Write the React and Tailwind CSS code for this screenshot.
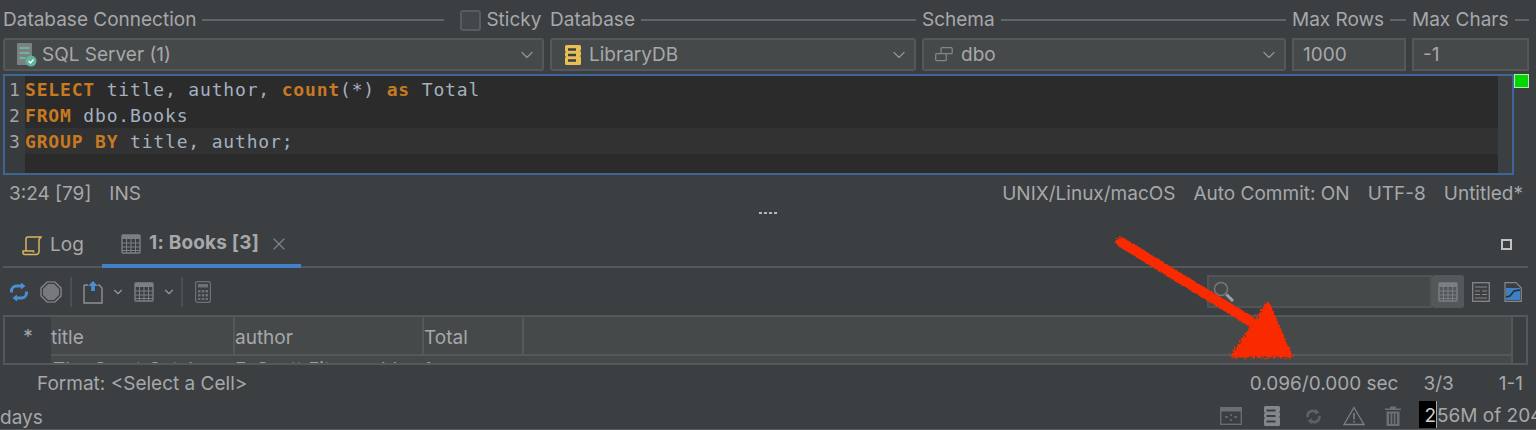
import React from "react";
import { ChevronDown, X } from "lucide-react";

const GridIcon = ({ className = "" }) => (
  <svg viewBox="0 0 20 20" className={className}>
    <rect x="1" y="1" width="18" height="18" rx="1" fill="none" stroke="#7d8083" strokeWidth="1.4" />
    <rect x="1" y="1" width="18" height="4" fill="#7d8083" />
    <path d="M1 9h18M1 13h18M1 16.5h18M5.5 5v14M10 5v14M14.5 5v14" stroke="#7d8083" strokeWidth="1" />
  </svg>
);

const Label = ({ children }) => (
  <div className="flex h-6 items-center gap-[6px]">
    <span className="whitespace-nowrap pt-[1px]">{children}</span>
    <span className="h-[2px] flex-1 bg-[#626567]" />
  </div>
);

const Select = ({ icon, text }) => (
  <div className="flex h-[33px] items-center rounded-[3px] border-2 border-[#55585a] bg-[#45494a]">
    <span className="flex w-[32px] shrink-0 justify-end">{icon}</span>
    <span className="ml-[5px] flex-1 whitespace-nowrap pt-[2px]">{text}</span>
    <ChevronDown className="mr-[5px] h-[20px] w-[20px] text-[#8f9194]" strokeWidth={1.6} />
  </div>
);

const Input = ({ text }) => (
  <div className="flex h-[33px] items-center border-2 border-[#55585a] bg-[#45494a] pl-[9px] pt-[2px]">{text}</div>
);

const ServerIcon = (
  <svg viewBox="0 0 20 24" className="h-[24px] w-[20px]">
    <rect x="0" y="0" width="15" height="22" rx="1" fill="#7d8083" />
    <path d="M2.5 5h10M2.500 10h10M2.500 15h6" stroke="#6cb59a" strokeWidth="2" />
    <circle cx="14" cy="18" r="5.500" fill="#5fb39a" />
    <path d="M11.500 18l2 2 3-3.500" fill="none" stroke="#fff" strokeWidth="1.400" />
  </svg>
);

const DbIcon = (
  <svg viewBox="0 0 16 20" className="mr-[3px] h-[20px] w-[16px]">
    <path d="M1.500 0h13A1.500 1.500 0 0 1 16 1.500V5l-1 1 1 1v3l-1 1 1 1v6.500a1.500 1.500 0 0 1-1.500 1.500h-13A1.500 1.500 0 0 1 0 18.500V13l1-1-1-1V8l1-1-1-1V1.500A1.500 1.500 0 0 1 1.500 0z" fill="#e8bf57" />
    <path d="M3 4.500h8M3 10h8M3 15.500h8" stroke="#3c3f41" strokeWidth="2.400" />
  </svg>
);

const SchemaIcon = (
  <svg viewBox="0 0 18 15" className="mr-[3px] h-[15px] w-[18px]" fill="none" stroke="#85888b" strokeWidth="1.200">
    <rect x="0.700" y="6.700" width="10.500" height="7" rx="1" />
    <path d="M6 6.500V1.700a1 1 0 0 1 1-1h9.200a1 1 0 0 1 1 1v4a1 1 0 0 1-1 1h-5" />
  </svg>
);

const Kw = ({ children }) => <span className="font-bold text-[#c77a22]">{children}</span>;

const Line = ({ active, children }) => (
  <div className={`flex h-[26px] items-center whitespace-pre pt-[1px] ${active ? "bg-[#323232]" : ""}`}>{children}</div>
);

const ToolSep = () => <span className="block h-[30px] w-[2px] bg-[#4c4f51]" />;

const Small = ({ className = "" }) => <ChevronDown className={`h-[14px] w-[14px] text-[#96989a] ${className}`} strokeWidth={2} />;

export default function App() {
  return (
    <div className="relative h-[430px] w-[1536px] overflow-hidden border-b border-[#5a5d5f] bg-[#3c3f41] pt-2 font-['Inter',sans-serif] text-[19px] text-[#a6a8aa]">
      {/* connection bar */}
      <div className="flex gap-[6px] px-[3px]">
        <div className="flex w-[541px] flex-col gap-[6px]">
          <div className="flex h-6 items-center">
            <span className="whitespace-nowrap pt-[1px]">Database Connection</span>
            <span className="ml-[6px] h-[2px] w-[242px] bg-[#626567]" />
            <span className="ml-[16px] h-[21px] w-[21px] rounded-[3px] border-2 border-[#595c5e] bg-[#43474a]" />
            <span className="ml-[5px]">Sticky</span>
          </div>
          <Select icon={ServerIcon} text="SQL Server (1)" />
        </div>
        <div className="flex w-[366px] flex-col gap-[6px]">
          <Label>Database</Label>
          <Select icon={DbIcon} text="LibraryDB" />
        </div>
        <div className="flex w-[364px] flex-col gap-[6px]">
          <Label>Schema</Label>
          <Select icon={SchemaIcon} text="dbo" />
        </div>
        <div className="flex w-[114px] flex-col gap-[6px]">
          <Label>Max Rows</Label>
          <Input text="1000" />
        </div>
        <div className="flex w-[117px] flex-col gap-[6px]">
          <Label>Max Chars</Label>
          <Input text="-1" />
        </div>
      </div>

      {/* sql editor */}
      <div className="mt-[3px] flex items-start pl-[3px]">
        <div className="flex h-[101px] w-[1511px] border-2 border-[#3f6594] font-['DejaVu_Sans_Mono',monospace] text-[18px] font-normal tracking-[0.83px] text-[#a3b1c0]">
          <div className="w-[20px] shrink-0 bg-[#383b3d] text-[#a3a5a7]">
            <div className="flex h-[26px] items-center pl-[4px] pt-[1px]">1</div>
            <div className="flex h-[26px] items-center pl-[4px] pt-[1px]">2</div>
            <div className="flex h-[26px] items-center pl-[4px] pt-[1px]">3</div>
          </div>
          <div className="flex-1 bg-[#2b2b2b]">
            <Line><Kw>SELECT</Kw> title, author, <Kw>count</Kw>(*) <Kw>as</Kw> Total</Line>
            <Line><Kw>FROM</Kw> dbo.Books</Line>
            <Line active><Kw>GROUP BY</Kw> title, author;</Line>
          </div>
          <div className="w-[14px] shrink-0 bg-[#3c3f41]" />
        </div>
        <span className="h-[14px] w-[15px] border border-[#b9e6b9] bg-[#00d800]" />
      </div>

      {/* editor status */}
      <div className="flex h-[35px] items-center justify-between pl-[9px] pr-[13px] pt-[3px]">
        <div className="flex gap-[18px]">
          <span>3:24 [79]</span>
          <span>INS</span>
        </div>
        <div className="flex gap-[18px]">
          <span>UNIX/Linux/macOS</span>
          <span>Auto Commit: ON</span>
          <span>UTF-8</span>
          <span>Untitled*</span>
        </div>
      </div>

      {/* splitter */}
      <div className="flex h-[13px] items-start justify-center gap-[2px] pt-[2px]">
        <span className="h-[2px] w-[3px] bg-[#b5b7b9]" />
        <span className="h-[2px] w-[3px] bg-[#b5b7b9]" />
        <span className="h-[2px] w-[3px] bg-[#b5b7b9]" />
        <span className="h-[2px] w-[3px] bg-[#b5b7b9]" />
      </div>

      {/* result tabs */}
      <div className="ml-[3px] flex h-[45px] w-[1525px] items-stretch border-b-2 border-[#55585a]">
        <div className="flex w-[99px] items-center pl-[19px] pt-[2px]">
          <svg viewBox="0 0 20 20" className="h-[20px] w-[20px]" fill="none" stroke="#d9b45f" strokeWidth="1.500">
            <path d="M4 15V3a2 2 0 0 1 2-2h13l-2 2.500V15a3 3 0 0 1-3 3.500H3A2 2 0 0 1 1 16.500V15h10.500v1.500" />
          </svg>
          <span className="ml-[8px]">Log</span>
        </div>
        <div className="-mb-[2px] flex w-[199px] items-center border-b-4 border-[#4380c8] pl-[19px]">
          <GridIcon className="h-[20px] w-[20px]" />
          <span className="ml-[8px] whitespace-nowrap font-bold tracking-[0.2px]">1: Books [3]</span>
          <X className="ml-[10px] h-[20px] w-[20px] text-[#85888a]" strokeWidth={1.300} />
        </div>
        <div className="flex flex-1 items-center justify-end pr-[16px]">
          <span className="h-[11px] w-[11px] border-2 border-[#c0c2c4]" />
        </div>
      </div>

      {/* result toolbar */}
      <div className="flex h-[47px] items-center pl-[9px] pr-[14px]">
        <svg viewBox="0 0 20 20" className="h-[20px] w-[20px]" fill="none" stroke="#4a8fd4" strokeWidth="3">
          <path d="M2.500 10.500V9a5 5 0 0 1 5-5H14" />
          <path d="M12 0.500l4.500 3.500L12 7.500z" fill="#4a8fd4" stroke="none" />
          <path d="M17.500 9.500V11a5 5 0 0 1-5 5H6" />
          <path d="M8 12.500L3.500 16 8 19.500z" fill="#4a8fd4" stroke="none" />
        </svg>
        <svg viewBox="0 0 22 22" className="ml-[11px] h-[22px] w-[22px]">
          <path d="M7 1h8l6 6v8l-6 6H7l-6-6V7z" fill="#3c3f41" stroke="#8e9093" strokeWidth="1.200" />
          <path d="M8 3h6l5 5v6l-5 5H8l-5-5V8z" fill="#77797c" />
        </svg>
        <span className="ml-[8px]"><ToolSep /></span>
        <svg viewBox="0 0 20 24" className="ml-[11px] h-[24px] w-[20px]" fill="none">
          <path d="M1 5h4M15 5h1l3 3v15H1V5" stroke="#8e9093" strokeWidth="1.400" />
          <path d="M10 1l5 5h-3.200v5H8.200V6H5z" fill="#4a8fd4" />
        </svg>
        <Small className="ml-[8px]" />
        <GridIcon className="ml-[9px] h-[20px] w-[20px]" />
        <Small className="ml-[8px]" />
        <span className="ml-[5px]"><ToolSep /></span>
        <svg viewBox="0 0 16 22" className="ml-[12px] h-[22px] w-[16px]" fill="#6f7275">
          <rect x="0.600" y="0.600" width="14.800" height="20.800" rx="2" fill="none" stroke="#6f7275" strokeWidth="1.200" />
          <rect x="3" y="3" width="10" height="3.500" />
          <path d="M3 9h2.500v2.500H3zM6.800 9h2.500v2.500H6.800zM10.500 9H13v2.500h-2.500zM3 13h2.500v2.500H3zM6.800 13h2.500v2.500H6.800zM10.500 13H13v2.500h-2.500zM3 17h2.500v2H3zM6.800 17h2.500v2H6.800zM10.500 17H13v2h-2.500z" />
        </svg>

        <div className="ml-auto flex h-[33px] w-[225px] items-center border-2 border-[#515456] bg-[#45494a] pl-[3px]">
          <svg viewBox="0 0 24 24" className="h-[24px] w-[24px]" fill="none">
            <circle cx="9" cy="9" r="6.500" stroke="#75787a" strokeWidth="1.500" />
            <path d="M14.500 14.500L21 21" stroke="#9fa2a4" strokeWidth="3" />
          </svg>
        </div>
        <div className="flex h-[33px] w-[32px] items-center justify-center rounded-[3px] bg-[#55585a]">
          <GridIcon className="h-[20px] w-[20px]" />
        </div>
        <svg viewBox="0 0 18 20" className="ml-[8px] h-[20px] w-[18px]" fill="none" stroke="#85888a">
          <rect x="0.700" y="0.700" width="16.600" height="18.600" strokeWidth="1.300" />
          <path d="M3 5h12M3 9h5M10 9h5M3 12.500h5M10 12.500h5M3 16h12" strokeWidth="1.200" />
        </svg>
        <svg viewBox="0 0 18 20" className="ml-[14px] h-[20px] w-[18px]">
          <path d="M1 .7h11l5.300 5.300v13.300H1z" fill="none" stroke="#85888a" strokeWidth="1.200" />
          <rect x="2" y="6" width="14" height="12" fill="#3f7fc4" />
          <path d="M2 15l4-1 4-5 6-1" fill="none" stroke="#2b2d2f" strokeWidth="1.500" />
        </svg>
      </div>

      {/* results table */}
      <div className="ml-[3px] flex h-[50px] w-[1525px] overflow-hidden border-2 border-[#55585a] bg-[#45494a]">
        <div className="flex w-[46px] shrink-0 justify-center bg-[#3c3f41] pt-[10px] leading-none">*</div>
        <div className="flex-1">
          <div className="flex h-[39px] border-b-2 border-[#55585a]">
            <div className="flex w-[184px] items-center border-r-2 border-[#55585a] pt-[5px]">title</div>
            <div className="flex w-[189px] items-center border-r-2 border-[#55585a] pt-[5px]">author</div>
            <div className="flex w-[100px] items-center border-r-2 border-[#55585a] pt-[5px]">Total</div>
          </div>
          <div className="flex whitespace-nowrap pt-[4px] leading-[20px] text-[#9b9d9f]">
            <span className="w-[184px] pl-[2px]">The Great Gatsby</span>
            <span className="w-[189px]">F. Scott Fitzgerald</span>
            <span className="w-[100px]">1</span>
          </div>
        </div>
        <div className="w-[15px] shrink-0 border-l-2 border-[#55585a] bg-[#3c3f41]" />
      </div>

      {/* result status */}
      <div className="flex h-[36px] items-center pl-[37px] pr-[13px] pt-[3px]">
        <span>Format: &lt;Select a Cell&gt;</span>
        <span className="ml-auto">0.096/0.000 sec</span>
        <span className="ml-[25px]">3/3</span>
        <span className="ml-[45px]">1-1</span>
      </div>

      {/* ide status bar */}
      <div className="flex h-[27px] items-stretch">
        <span className="pt-[3px]">days</span>
        <div className="ml-auto flex items-center pt-[3px]">
          <svg viewBox="0 0 22 18" className="h-[18px] w-[22px]" fill="none" stroke="#6d7073">
            <rect x="0.700" y="0.700" width="20.600" height="16.600" strokeWidth="1.300" />
            <rect x="1" y="1" width="20" height="3" fill="#6d7073" />
            <path d="M5 10h3M14 10h3M11 7v2M11 12v2" strokeWidth="1.500" />
          </svg>
          <svg viewBox="0 0 16 20" className="ml-[22px] h-[20px] w-[16px]">
            <path d="M1.500 0h13A1.500 1.500 0 0 1 16 1.500V5l-1 1 1 1v3l-1 1 1 1v6.500a1.500 1.500 0 0 1-1.500 1.500h-13A1.500 1.500 0 0 1 0 18.500V13l1-1-1-1V8l1-1-1-1V1.500A1.500 1.500 0 0 1 1.500 0z" fill="#85888a" />
            <path d="M2.500 4.500h9M2.500 10h9M2.500 15.500h9" stroke="#3c3f41" strokeWidth="2.200" />
          </svg>
          <svg viewBox="0 0 20 20" className="ml-[25px] h-[17px] w-[17px]" fill="none" stroke="#5f6265" strokeWidth="3">
            <path d="M3 11V9a6 6 0 0 1 10-4" />
            <path d="M17 9v2a6 6 0 0 1-10 4" />
            <path d="M12 1l5 4-5 3zM8 19l-5-4 5-3z" fill="#5f6265" stroke="none" />
          </svg>
          <svg viewBox="0 0 22 20" className="ml-[21px] h-[20px] w-[22px]" fill="none" stroke="#7d8083" strokeWidth="1.300">
            <path d="M11 1.500L21 18.500H1z" />
            <path d="M11 7v6.500M11 15v1.500" strokeWidth="1.600" />
          </svg>
          <svg viewBox="0 0 16 20" className="ml-[20px] h-[20px] w-[16px]" fill="#6d7073">
            <path d="M0 2.500h16V4H0zM5 .5h6v2H5z" />
            <path d="M1.500 5.500h13V20h-13zM4 7.500V18h1.500V7.500zM7.300 7.500V18h1.500V7.500zM10.500 7.500V18H12V7.500z" fillRule="evenodd" />
          </svg>
        </div>
        <div className="ml-[18px] flex w-[117px] items-stretch overflow-hidden whitespace-nowrap">
          <span className="flex w-[18px] shrink-0 items-center justify-end border-r border-[#a6a8aa] bg-black pt-[3px] text-[#d0d0d0]">2</span>
          <span className="flex items-center pt-[3px]">56M of 2048M</span>
        </div>
      </div>

      {/* hand-drawn red arrow over the panel */}
      <svg className="pointer-events-none absolute left-[1100px] top-[225px] h-[150px] w-[210px]" viewBox="0 0 210 150">
        <defs>
          <filter id="rough" x="-10%" y="-10%" width="120%" height="120%">
            <feTurbulence type="fractalNoise" baseFrequency="0.45" numOctaves="2" seed="4" />
            <feDisplacementMap in="SourceGraphic" scale="7" />
          </filter>
        </defs>
        <g filter="url(#rough)" fill="#fa2a00" stroke="#fa2a00">
          <path d="M21 17L150 96" strokeWidth="10" fill="none" strokeLinecap="round" />
          <path d="M168 78L132 131L191 131z" strokeWidth="3" strokeLinejoin="round" />
        </g>
      </svg>
    </div>
  );
}
